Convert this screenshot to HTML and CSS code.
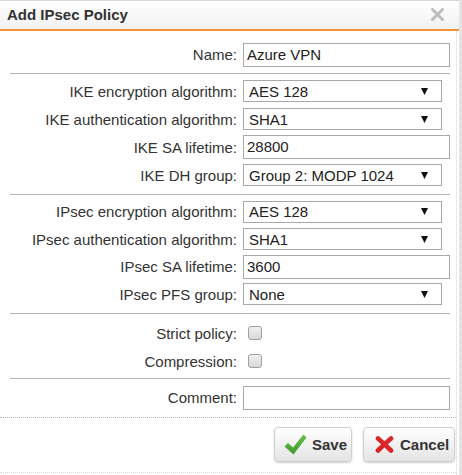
FILE: index.html
```html
<!DOCTYPE html>
<html>
<head>
<meta charset="utf-8">
<link rel="stylesheet" href="styles.css">
</head>
<body>
<div class="dialog">
  <div class="titlebar">
    <span class="title">Add IPsec Policy</span>
    <svg class="close" width="13" height="13" viewBox="0 0 13 13"><path d="M1.5 1.5 L11.5 11.5 M11.5 1.5 L1.5 11.5" stroke="#bdbdbd" stroke-width="3" stroke-linecap="round"/></svg>
  </div>
  <div class="content">
    <div class="section s-name">
      <div class="row short"><label>Name:</label><div class="input">Azure VPN</div></div>
    </div>
    <div class="sep"></div>
    <div class="section s-ike">
      <div class="row"><label>IKE encryption algorithm:</label><div class="select"><span>AES 128</span><svg width="7" height="7" viewBox="0 0 7 7"><path d="M0 0 H7 L3.5 7 Z" fill="#111"/></svg></div></div>
      <div class="row"><label>IKE authentication algorithm:</label><div class="select"><span>SHA1</span><svg width="7" height="7" viewBox="0 0 7 7"><path d="M0 0 H7 L3.5 7 Z" fill="#111"/></svg></div></div>
      <div class="row"><label>IKE SA lifetime:</label><div class="input">28800</div></div>
      <div class="row"><label>IKE DH group:</label><div class="select"><span>Group 2: MODP 1024</span><svg width="7" height="7" viewBox="0 0 7 7"><path d="M0 0 H7 L3.5 7 Z" fill="#111"/></svg></div></div>
    </div>
    <div class="sep"></div>
    <div class="section s-ipsec">
      <div class="row"><label>IPsec encryption algorithm:</label><div class="select"><span>AES 128</span><svg width="7" height="7" viewBox="0 0 7 7"><path d="M0 0 H7 L3.5 7 Z" fill="#111"/></svg></div></div>
      <div class="row"><label>IPsec authentication algorithm:</label><div class="select"><span>SHA1</span><svg width="7" height="7" viewBox="0 0 7 7"><path d="M0 0 H7 L3.5 7 Z" fill="#111"/></svg></div></div>
      <div class="row"><label>IPsec SA lifetime:</label><div class="input">3600</div></div>
      <div class="row"><label>IPsec PFS group:</label><div class="select"><span>None</span><svg width="7" height="7" viewBox="0 0 7 7"><path d="M0 0 H7 L3.5 7 Z" fill="#111"/></svg></div></div>
    </div>
    <div class="sep"></div>
    <div class="section s-check">
      <div class="row"><label>Strict policy:</label><span class="checkbox"></span></div>
      <div class="row"><label>Compression:</label><span class="checkbox"></span></div>
    </div>
    <div class="sep"></div>
    <div class="section s-comment">
      <div class="row short"><label>Comment:</label><div class="input"></div></div>
    </div>
    <div class="buttons">
      <button class="btn save"><svg width="23" height="21" viewBox="0 0 23 21"><defs><linearGradient id="g" x1="0" y1="0" x2="0" y2="1"><stop offset="0" stop-color="#6cc04a"/><stop offset="1" stop-color="#3d9a2e"/></linearGradient></defs><path d="M0.5 12.5 L4 9 L9 13.5 L19.5 0.5 L22.5 3.5 L9.5 20.5 Z" fill="url(#g)"/></svg><span>Save</span></button>
      <button class="btn cancel"><svg width="19" height="17" viewBox="0 0 19 17"><path d="M3 2.5 Q9.5 8 16 14.5 M16 2.5 Q9.5 8 3 14.5" stroke="#d8262b" stroke-width="4.6" fill="none" stroke-linecap="round"/></svg><span>Cancel</span></button>
    </div>
  </div>
</div>
</body>
</html>
```

FILE: styles.css
```css
html, body {
  margin: 0;
  padding: 0;
}
body {
  background: #e4e4e4;
  font-family: "Liberation Sans", Arial, sans-serif;
  color: #333;
}
.dialog {
  width: 459px;
  height: 475px;
  background: #fff;
  box-sizing: border-box;
}
.titlebar {
  height: 31px;
  box-sizing: border-box;
  border-top: 1px solid #d6d6d6;
  border-bottom: 2px solid #ef9634;
  background: linear-gradient(#ffffff, #f1f1f1);
  display: flex;
  align-items: center;
  justify-content: space-between;
  padding: 0 15px 0 7px;
}
.title {
  font-size: 15px;
  font-weight: bold;
  color: #333;
  margin-top: -1px;
}
.close {
  display: block;
  margin-top: -1px;
}
.content {
  width: 457px;
  border-right: 1px dotted #d4d4d4;
  height: 444px;
  box-sizing: border-box;
}
.section {
  display: flex;
  flex-direction: column;
}
.s-name { padding: 11px 0 6px; }
.s-ike { padding: 3px 0 5px; }
.s-ipsec { padding: 3px 0 5px; }
.s-ipsec .row { height: 27.5px; }
.s-check { padding: 5px 0 3px; }
.s-comment { padding: 6px 0 7px; }
.row {
  display: grid;
  grid-template-columns: 237px auto;
  column-gap: 6px;
  align-items: center;
  height: 28px;
}
.row.short { height: 25px; }
label {
  text-align: right;
  font-size: 15px;
  color: #333;
  white-space: nowrap;
}
.input {
  width: 207px;
  height: 24px;
  box-sizing: border-box;
  border: 1px solid #a9a9a9;
  font-size: 15px;
  line-height: 22px;
  padding-left: 3px;
  color: #222;
}
.select {
  width: 199px;
  height: 22px;
  box-sizing: border-box;
  border: 1px solid #a9a9a9;
  font-size: 15px;
  color: #222;
  display: flex;
  align-items: center;
  justify-content: space-between;
  padding: 0 13px 0 5px;
}
.select svg { display: block; }
.checkbox {
  display: block;
  width: 12px;
  height: 12px;
  margin-left: 5px;
  border: 1px solid #a0a0a0;
  border-radius: 3px;
  background: linear-gradient(#f0f0f0, #d8d8d8);
}
.sep {
  margin-left: 10px;
  width: 440px;
  height: 1px;
  background: #b4b4b4;
}
.buttons {
  border-top: 1px dotted #b8b8b8;
  border-bottom: 1px dotted #d8d8d8;
  display: flex;
  justify-content: flex-end;
  gap: 11px;
  padding: 9px 1px 10px 0;
}
.btn {
  height: 35px;
  box-sizing: border-box;
  border: 1px solid #cfcfcf;
  border-radius: 4px;
  background: linear-gradient(#ffffff, #e4e4e4);
  box-shadow: 0 1px 2px rgba(0,0,0,0.18);
  display: flex;
  align-items: center;
  font-family: "Liberation Sans", Arial, sans-serif;
  font-size: 15px;
  font-weight: bold;
  color: #333;
  padding: 0;
  margin: 0;
}
.btn svg { display: block; }
.save { width: 78px; padding-left: 9px; gap: 5px; }
.cancel { width: 92px; padding-left: 11px; gap: 6px; }
```
